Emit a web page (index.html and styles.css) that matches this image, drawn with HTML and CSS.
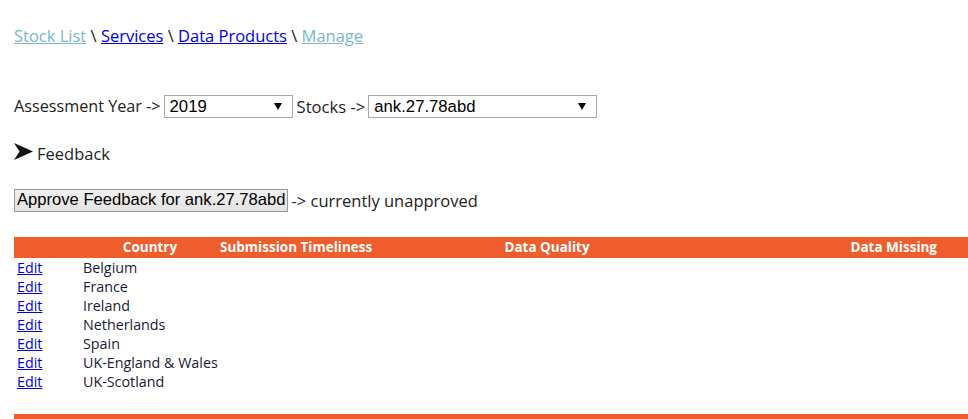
FILE: index.html
```html
<!DOCTYPE html>
<html>
<head>
<meta charset="utf-8">
<link rel="stylesheet" href="styles.css">
</head>
<body>
<nav class="crumbs">
  <a class="visited" href="#">Stock List</a> \ <a href="#">Services</a> \ <a href="#">Data Products</a> \ <a class="visited" href="#">Manage</a>
</nav>

<div class="filters">
  <span>Assessment Year -&gt;</span>
  <select class="sel sel-year"><option>2019</option></select>
  <span class="stocks-label">Stocks -&gt;</span>
  <select class="sel sel-stock"><option>ank.27.78abd</option></select>
</div>

<div class="feedback">
  <svg class="arrow" width="19" height="17" viewBox="0 0 19 17"><path d="M0 0 L19 8.5 L0 17 L5.5 8.5 Z" fill="#111"/></svg>
  <span>Feedback</span>
</div>

<div class="approve">
  <button class="btn">Approve Feedback for ank.27.78abd</button>
  <span>-&gt; currently unapproved</span>
</div>

<div class="grid">
  <div class="hrow">
    <div class="h c1"></div>
    <div class="h c2">Country</div>
    <div class="h c3">Submission Timeliness</div>
    <div class="h c4">Data Quality</div>
    <div class="h c5">Data Missing</div>
  </div>
  <div class="row"><a href="#">Edit</a><span>Belgium</span></div>
  <div class="row"><a href="#">Edit</a><span>France</span></div>
  <div class="row"><a href="#">Edit</a><span>Ireland</span></div>
  <div class="row"><a href="#">Edit</a><span>Netherlands</span></div>
  <div class="row"><a href="#">Edit</a><span>Spain</span></div>
  <div class="row"><a href="#">Edit</a><span>UK-England &amp; Wales</span></div>
  <div class="row"><a href="#">Edit</a><span>UK-Scotland</span></div>
</div>

<div class="footer-bar"></div>
</body>
</html>
```

FILE: styles.css
```css
html, body {
  margin: 0;
  padding: 0;
  overflow: hidden;
}
body {
  font-family: "Open Sans", "Noto Sans", sans-serif;
  font-size: 16.5px;
  color: #222;
  padding: 0 0 0 14px;
  background: #fff;
}
a { color: #0000ee; }
a.visited { color: #7ab8c8; }

.crumbs {
  padding-top: 24px;
  height: 24px;
  line-height: 24px;
}

.filters {
  margin-top: 46px;
  display: flex;
  align-items: center;
  gap: 3px;
  height: 24px;
  font-size: 16.2px;
}
.stocks-label { font-size: 16.6px; padding-left: 1px; }
.sel {
  -webkit-appearance: none;
  appearance: none;
  font-family: "Liberation Sans", Arial, sans-serif;
  font-size: 16.7px;
  height: 23px;
  border: 1px solid #a9a9a9;
  border-radius: 0;
  background-color: #fff;
  background-image: url("data:image/svg+xml,%3Csvg xmlns='http://www.w3.org/2000/svg' width='8' height='7' viewBox='0 0 8 7'%3E%3Cpath d='M0 0H8L4 7Z' fill='%23000'/%3E%3C/svg%3E");
  background-repeat: no-repeat;
  background-position: right 10px center;
  color: #000;
  padding: 0 0 0 5px;
  margin: 0;
}
.sel-year { width: 129px; }
.sel-stock { width: 229px; }

.feedback {
  margin-top: 23px;
  display: flex;
  align-items: center;
  gap: 4px;
  height: 24px;
}
.arrow { margin-top: -3px; }

.approve {
  margin-top: 23px;
  display: flex;
  align-items: center;
  gap: 3px;
  height: 24px;
}
.btn {
  font-family: "Liberation Sans", Arial, sans-serif;
  font-size: 16.6px;
  height: 23px;
  padding: 0 2px;
  margin: 0;
  border: 1px solid #999;
  background: linear-gradient(#f0f0f0, #e3e3e3);
  color: #000;
}

.grid {
  margin-top: 25px;
  font-size: 13.5px;
}
.hrow {
  display: grid;
  grid-template-columns: 66px 140px 156px 342px 1fr;
  background: #f05d2d;
  color: #fff;
  font-weight: 700;
  height: 21px;
  line-height: 21px;
}
.h { text-align: center; white-space: nowrap; }
.c3 { text-align: left; }
.c5 { text-align: right; padding-right: 31px; }
.row {
  display: grid;
  grid-template-columns: 66px 1fr;
  height: 19px;
  line-height: 19px;
  font-size: 14.3px;
  color: #1a1a3a;
  padding-left: 3px;
}
.footer-bar {
  margin-top: 23px;
  height: 10px;
  background: #f05d2d;
}
```
